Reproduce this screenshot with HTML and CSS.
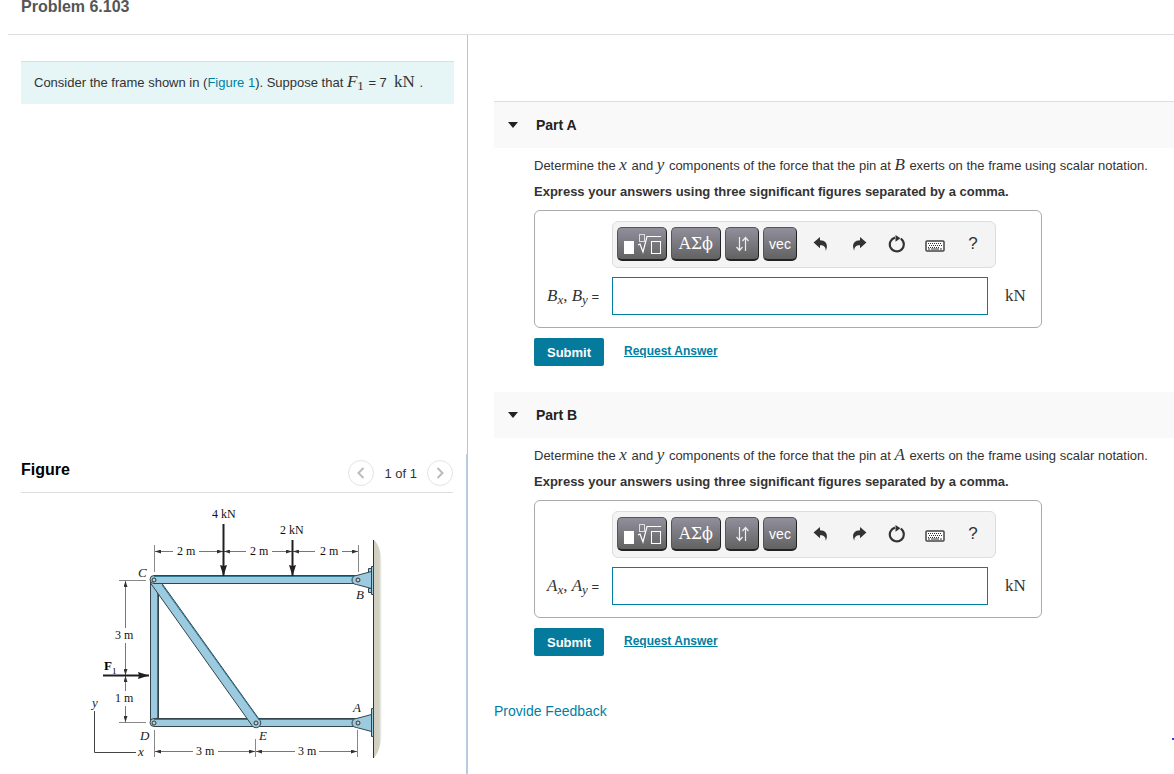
FILE: index.html
```html
<!DOCTYPE html>
<html lang="en">
<head>
    <meta charset="UTF-8">
    <meta name="viewport" content="width=device-width, initial-scale=1.0">
    <title>Problem 6.103</title>
    <link rel="stylesheet" href="styles.css">
</head>
<body>

    <!-- shared toolbar icons -->
    <svg class="sprite" aria-hidden="true">
        <symbol id="icon-template" viewBox="0 0 40 24">
            <rect x="2" y="9" width="10" height="13" fill="#fff"/>
            <rect x="17.500" y="2.500" width="5" height="7" fill="none" stroke="#ddd"/>
            <path d="M16 13l2-1 3 8 4-15.500h14" fill="none" stroke="#fff" stroke-width="1.200"/>
            <rect x="29.500" y="9.500" width="9" height="12" fill="none" stroke="#fff"/>
        </symbol>
        <symbol id="icon-arrows" viewBox="0 0 14 16">
            <path d="M4.500 1v13M1.500 11l3 3.500 3-3.500M10.500 15V2M7.500 5l3-3.500 3 3.500" fill="none" stroke="#eee" stroke-width="1.200"/>
        </symbol>
        <symbol id="icon-undo" viewBox="0 0 16 16">
            <path d="M7 1v3.200c5 .1 7.500 3 6.800 7.300-.2 1.400-.6 2.500-1.100 3.300.1-3.800-1.500-5.600-5.700-5.600v3.100L.6 6.400z" fill="#333"/>
        </symbol>
        <symbol id="icon-reset" viewBox="0 0 18 18">
            <path d="M12.800 3.600A7 7 0 1 1 7 2.600" fill="none" stroke="#333" stroke-width="2.200"/>
            <path d="M7.500 0l5 3.200-5 3.600z" fill="#333"/>
        </symbol>
        <symbol id="icon-keyboard" viewBox="0 0 20 12">
            <rect x="1" y="1" width="18" height="10" rx="1" fill="#fff" stroke="#444" stroke-width="1.500"/>
            <path d="M3 3.500h14M4 5.500h13M3 7.500h12" stroke="#333" stroke-dasharray="1 1"/>
            <path d="M6 9h8" stroke="#333"/>
            <path d="M3 9h2M15 9h2" stroke="#333"/>
        </symbol>
    </svg>

    <header class="page-header">
        <h1>Problem 6.103</h1>
    </header>

    <main class="layout">
        <div class="left">
            <section class="problem">
                <p class="notice">Consider the frame shown in (<a href="#figure">Figure 1</a>). Suppose that <span class="math"><i>F</i><sub>1</sub></span> = 7 &nbsp;<span class="math">kN</span> .</p>
            </section>

            <section class="figure" id="figure">
                <div class="figure-header">
                    <h2>Figure</h2>
                    <div class="pager">
                        <button type="button" class="pager-btn" aria-label="Previous figure">
                            <svg width="8" height="12" viewBox="0 0 8 12"><path d="M6.500 1L1.500 6l5 5"/></svg>
                        </button>
                        <span>1 of 1</span>
                        <button type="button" class="pager-btn" aria-label="Next figure">
                            <svg width="8" height="12" viewBox="0 0 8 12"><path d="M1.500 1l5 5-5 5"/></svg>
                        </button>
                    </div>
                </div>

                <svg class="frame" width="320" height="270" viewBox="77 500 320 270" role="img" aria-label="Frame with pins A and B">
                    <defs>
                        <linearGradient id="wall" x1="0" x2="1" y1="0" y2="0">
                            <stop offset="0" stop-color="#cfcdbd"/>
                            <stop offset="0.650" stop-color="#d3d1c3"/>
                            <stop offset="1" stop-color="#fff"/>
                        </linearGradient>
                        <marker id="head" viewBox="0 0 6 4" refX="6" refY="2" markerWidth="6" markerHeight="4" markerUnits="userSpaceOnUse" orient="auto-start-reverse">
                            <path d="M0 0l6 2-6 2z" fill="#333"/>
                        </marker>
                        <marker id="force" viewBox="0 0 11 7" refX="11" refY="3.500" markerWidth="11" markerHeight="7" markerUnits="userSpaceOnUse" orient="auto">
                            <path d="M0 0l11 3.500L0 7l1-3.500z" fill="#231f20"/>
                        </marker>
                    </defs>

                    <!-- wall -->
                    <path d="M374 540c5 5 8 14 8 28v160c0 14-3 24-8 30z" fill="url(#wall)"/>
                    <path d="M373.500 540v218" stroke="#333" fill="none"/>

                    <!-- members -->
                    <path class="member" d="M150.500 580v142h8V580z"/>
                    <path class="shade" d="M157.500 588v132"/>
                    <path class="member" d="M154 718.500h204v8H154a4 4 0 0 1 0-8z"/>
                    <path class="shade" d="M154 719.500h203"/>
                    <path class="member" d="M150.500 583L252 725.500a4.700 4.700 0 0 0 8-5L158 578z"/>
                    <path class="shade" d="M162 585l97 135"/>
                    <path class="member" d="M154 575.500h204v8H154a4 4 0 0 1 0-8z"/>
                    <path class="shade" d="M154 576.500h203"/>

                    <!-- supports -->
                    <path class="member" d="M368.500 568.500h3v4h-3zM368.500 588.500h3v4h-3z"/>
                    <path class="member" d="M356.500 575.500l15-4v17l-15-4a4.500 4.500 0 0 1 0-9z"/>
                    <path class="member" d="M371.500 566.500h2v28h-2z"/>
                    <path class="member" d="M356.500 718.500l15-4v17l-15-4a4.500 4.500 0 0 1 0-9z"/>
                    <path class="member" d="M371.500 708.500h2v28h-2z"/>

                    <!-- pins -->
                    <g class="pin">
                        <circle cx="154" cy="580" r="2"/>
                        <circle cx="154" cy="723" r="2"/>
                        <circle cx="256" cy="723" r="2"/>
                        <circle cx="358" cy="580" r="2"/>
                        <circle cx="358" cy="723" r="2"/>
                    </g>

                    <!-- dimension lines -->
                    <g class="tick">
                        <path d="M154.500 545v27M358.500 545v27M119 580.500h27M119 722.500h27"/>
                        <path d="M154.500 730v27M255.500 739v18M357.500 730v27"/>
                    </g>
                    <g class="dim">
                        <path d="M173 551.500h-18"/>
                        <path d="M199 551.500h24"/>
                        <path d="M246 551.500h-22"/>
                        <path d="M272 551.500h20"/>
                        <path d="M315 551.500h-22"/>
                        <path d="M342 551.500h16"/>
                        <path d="M125.500 628v-47"/>
                        <path d="M125.500 643v32"/>
                        <path d="M125.500 691v-15"/>
                        <path d="M125.500 706v16"/>
                        <path d="M193 751.500h-38"/>
                        <path d="M218 751.500h37"/>
                        <path d="M295 751.500h-39"/>
                        <path d="M319 751.500h38"/>
                    </g>
                    <path d="M94.500 711v41.500H136" fill="none" stroke="#444"/>

                    <!-- loads -->
                    <g class="load">
                        <path d="M223.500 524v52"/>
                        <path d="M292.500 540v36"/>
                        <path d="M103 675.500h46"/>
                    </g>

                    <g class="label">
                        <text x="212" y="518">4 kN</text>
                        <text x="280" y="534">2 kN</text>
                        <text x="177" y="555">2 m</text>
                        <text x="250" y="555">2 m</text>
                        <text x="320" y="555">2 m</text>
                        <text x="115" y="639">3 m</text>
                        <text x="115" y="702">1 m</text>
                        <text x="196" y="755">3 m</text>
                        <text x="298" y="755">3 m</text>
                    </g>
                    <g class="point">
                        <text x="138" y="577">C</text>
                        <text x="356" y="599">B</text>
                        <text x="353" y="712">A</text>
                        <text x="140" y="740">D</text>
                        <text x="259" y="740">E</text>
                        <text x="92" y="707">y</text>
                        <text x="138" y="756">x</text>
                    </g>
                    <text class="force-name" x="104" y="670">F<tspan class="force-sub" x="112" y="674">1</tspan></text>
                </svg>
            </section>
        </div>

        <div class="right">
            <section class="part">
                <h2 class="part-header"><button type="button" class="toggle"><span class="caret"></span>Part A</button></h2>
                <form class="part-body">
                    <p>Determine the <i class="math">x</i> and <i class="math">y</i> components of the force that the pin at <i class="math">B</i> exerts on the frame using scalar notation.</p>
                    <p class="instruction">Express your answers using three significant figures separated by a comma.</p>

                    <div class="answer">
                        <div class="toolbar">
                            <div class="tools">
                                <button type="button" class="tool wide" aria-label="Templates"><svg width="40" height="24"><use href="#icon-template"/></svg></button>
                                <button type="button" class="tool wide greek">ΑΣϕ</button>
                                <button type="button" class="tool" aria-label="Arrows"><svg width="14" height="16"><use href="#icon-arrows"/></svg></button>
                                <button type="button" class="tool">vec</button>
                            </div>
                            <div class="tools">
                                <button type="button" class="tool plain" aria-label="Undo"><svg width="16" height="16"><use href="#icon-undo"/></svg></button>
                                <button type="button" class="tool plain" aria-label="Redo"><svg class="flip" width="16" height="16"><use href="#icon-undo"/></svg></button>
                                <button type="button" class="tool plain" aria-label="Reset"><svg width="18" height="18"><use href="#icon-reset"/></svg></button>
                                <button type="button" class="tool plain keyboard" aria-label="Keyboard"><svg width="20" height="12"><use href="#icon-keyboard"/></svg></button>
                                <button type="button" class="tool plain help">?</button>
                            </div>
                        </div>
                        <label for="answerA"><span class="math"><i>B</i><sub><i>x</i></sub>, <i>B</i><sub><i>y</i></sub></span> =</label>
                        <input type="text" id="answerA" class="answer-input">
                        <span class="unit math">kN</span>
                    </div>

                    <div class="actions">
                        <button type="submit" class="submit-btn">Submit</button>
                        <a href="#" class="request">Request Answer</a>
                    </div>
                </form>
            </section>

            <section class="part">
                <h2 class="part-header"><button type="button" class="toggle"><span class="caret"></span>Part B</button></h2>
                <form class="part-body">
                    <p>Determine the <i class="math">x</i> and <i class="math">y</i> components of the force that the pin at <i class="math">A</i> exerts on the frame using scalar notation.</p>
                    <p class="instruction">Express your answers using three significant figures separated by a comma.</p>

                    <div class="answer">
                        <div class="toolbar">
                            <div class="tools">
                                <button type="button" class="tool wide" aria-label="Templates"><svg width="40" height="24"><use href="#icon-template"/></svg></button>
                                <button type="button" class="tool wide greek">ΑΣϕ</button>
                                <button type="button" class="tool" aria-label="Arrows"><svg width="14" height="16"><use href="#icon-arrows"/></svg></button>
                                <button type="button" class="tool">vec</button>
                            </div>
                            <div class="tools">
                                <button type="button" class="tool plain" aria-label="Undo"><svg width="16" height="16"><use href="#icon-undo"/></svg></button>
                                <button type="button" class="tool plain" aria-label="Redo"><svg class="flip" width="16" height="16"><use href="#icon-undo"/></svg></button>
                                <button type="button" class="tool plain" aria-label="Reset"><svg width="18" height="18"><use href="#icon-reset"/></svg></button>
                                <button type="button" class="tool plain keyboard" aria-label="Keyboard"><svg width="20" height="12"><use href="#icon-keyboard"/></svg></button>
                                <button type="button" class="tool plain help">?</button>
                            </div>
                        </div>
                        <label for="answerB"><span class="math"><i>A</i><sub><i>x</i></sub>, <i>A</i><sub><i>y</i></sub></span> =</label>
                        <input type="text" id="answerB" class="answer-input">
                        <span class="unit math">kN</span>
                    </div>

                    <div class="actions">
                        <button type="submit" class="submit-btn">Submit</button>
                        <a href="#" class="request">Request Answer</a>
                    </div>
                </form>
            </section>

            <div class="feedback">
                <a href="#">Provide Feedback</a>
                <span class="dot"></span>
            </div>
        </div>
    </main>

</body>
</html>
```
FILE: styles.css
```css
* {
    box-sizing: border-box;
}
body {
    margin: 0;
    min-height: 100vh;
    display: flex;
    flex-direction: column;
    font-family: "Liberation Sans", Arial, sans-serif;
    font-size: 13px;
    color: #333;
    background: #fff;
}
h1, h2, p {
    margin: 0;
}
a {
    color: #007fa3;
    text-decoration: none;
}
button {
    font-family: inherit;
    cursor: pointer;
}
.sprite {
    display: none;
}
.math {
    font-family: "Liberation Serif", "Times New Roman", serif;
    font-size: 17px;
    line-height: 16px;
}
p .math {
    padding: 0 1px 0 0;
}
.math sub {
    font-size: 13px;
    line-height: 0;
    vertical-align: -3px;
}
.page-header {
    height: 35px;
    margin-left: 8px;
    padding-left: 13px;
    border-bottom: 1px solid #ddd;
}
.page-header h1 {
    font-size: 16px;
    line-height: 14px;
    color: #555;
}
.layout {
    flex: 1;
    display: grid;
    grid-template-columns: minmax(320px, 468px) minmax(0, 1fr);
}

/* left column */
.left {
    display: flex;
    flex-direction: column;
}
.problem {
    min-height: 419px;
    padding: 26px 13px 0 21px;
    border-right: 1px solid #b9c6d8;
}
.notice {
    padding: 12px 13px;
    line-height: 18px;
    background: #e6f5f6;
    border-top: 1px solid #ddd;
}
.figure {
    flex: 1;
    padding: 0 13px 0 21px;
    border-right: 2px solid #b8cce0;
}
.figure-header {
    display: flex;
    justify-content: space-between;
    height: 39px;
    border-bottom: 1px solid #ddd;
}
.figure-header h2 {
    font-size: 16px;
    line-height: 32px;
    color: #000;
}
.pager {
    display: flex;
    align-items: center;
    gap: 10px;
    font-size: 13px;
}
.pager-btn {
    display: flex;
    align-items: center;
    justify-content: center;
    width: 26px;
    height: 26px;
    padding: 0;
    border: 1px solid #e3e3e3;
    border-radius: 50%;
    background: #fff;
}
.pager-btn path {
    fill: none;
    stroke: #bbb;
    stroke-width: 2;
}

/* frame drawing */
.frame {
    display: block;
    margin: 7px auto 0;
    max-width: 100%;
    font-family: "Liberation Serif", "Times New Roman", serif;
}
.member {
    fill: #9ccbe0;
    stroke: #35444c;
}
.shade {
    fill: none;
    stroke: #2c7a93;
}
.pin {
    fill: #ccc;
    stroke: #333;
}
.tick {
    fill: none;
    stroke: #888;
}
.dim {
    fill: none;
    stroke: #777;
}
.dim path {
    marker-end: url(#head);
}
.load {
    fill: none;
    stroke: #231f20;
    stroke-width: 2;
}
.load path {
    marker-end: url(#force);
}
.label {
    font-size: 12px;
    fill: #111;
}
.point {
    font-size: 13px;
    font-style: italic;
    fill: #222;
}
.force-name {
    font-size: 13px;
    font-weight: bold;
}
.force-sub {
    font-size: 9px;
    font-weight: normal;
}

/* right column */
.right {
    padding: 66px 0 0 26px;
}
.part {
    padding-bottom: 26px;
}
.part:first-child .part-header {
    border-top: 1px solid #ddd;
}
.part-header {
    background: #f9f9f9;
}
.toggle {
    display: flex;
    align-items: center;
    gap: 18px;
    width: 100%;
    height: 46px;
    padding: 0 14px;
    border: none;
    background: none;
    font-size: 14px;
    font-weight: bold;
    color: #222;
}
.caret {
    border: 5px solid transparent;
    border-top: 6px solid #222;
    border-bottom: none;
}
.part-body {
    padding: 8px 0 0 40px;
}
.part-body p {
    line-height: 20px;
}
.part-body .instruction {
    margin: 6px 0 8px;
    font-weight: bold;
}
.answer {
    display: grid;
    grid-template-columns: 65px 1fr 41px;
    align-items: center;
    row-gap: 9px;
    max-width: 508px;
    padding: 10px 12px 12px;
    border: 1px solid #aaa;
    border-radius: 6px;
}
.toolbar {
    grid-column: 2 / -1;
    display: flex;
    gap: 7px;
    width: max-content;
    padding: 5px 5px 6px 4px;
    background: #f4f4f4;
    border: 1px solid #ddd;
    border-radius: 6px;
}
.tools {
    display: flex;
    gap: 4px;
}
.tool {
    display: flex;
    align-items: center;
    justify-content: center;
    width: 34px;
    height: 34px;
    padding: 0;
    border: 1px solid #555;
    border-right-color: #222;
    border-bottom: 2px solid #222;
    border-radius: 5px;
    background: linear-gradient(#918f9b, #626262);
    color: #fff;
    font-size: 14px;
}
.tool.wide {
    width: 50px;
}
.tool.greek {
    font-family: "DejaVu Serif", serif;
    font-size: 16px;
}
.tool.plain {
    border: none;
    background: none;
    color: #333;
}
.tool.keyboard {
    padding-top: 4px;
}
.tool.help {
    font-size: 17px;
}
.flip {
    transform: scaleX(-1);
}
.answer-input {
    width: 100%;
    height: 38px;
    padding: 0 8px;
    border: 1px solid #007fa3;
    font-size: 16px;
}
.unit {
    padding-left: 17px;
}
.actions {
    display: flex;
    gap: 20px;
    margin-top: 10px;
}
.submit-btn {
    width: 70px;
    height: 28px;
    padding: 0;
    border: none;
    border-radius: 2px;
    background: #047a9c;
    color: #fff;
    font-size: 13px;
    font-weight: bold;
}
.request {
    font-size: 12px;
    font-weight: bold;
    line-height: 26px;
    text-decoration: underline;
}
.feedback {
    display: flex;
    justify-content: space-between;
    align-items: flex-end;
    padding-top: 20px;
    font-size: 14px;
}
.feedback a {
    line-height: 18px;
    padding-bottom: 20px;
}
.dot {
    width: 2px;
    height: 2px;
    background: #33f;
}
```
